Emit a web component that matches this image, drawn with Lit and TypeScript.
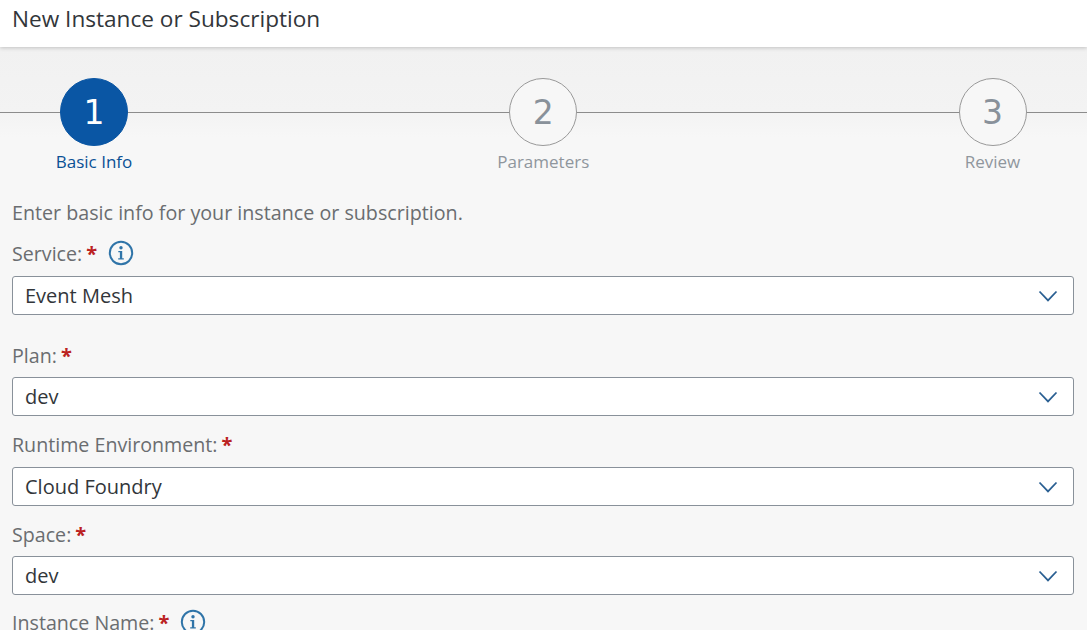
import { LitElement, html, css, nothing } from "lit";
import { customElement } from "lit/decorators.js";

const STEPS = ["Basic Info", "Parameters", "Review"];
const FIELDS = [
  { label: "Service:", value: "Event Mesh", info: true, cls: "f-service" },
  { label: "Plan:", value: "dev", info: false, cls: "f-plan" },
  { label: "Runtime Environment:", value: "Cloud Foundry", info: false, cls: "f-runtime" },
  { label: "Space:", value: "dev", info: false, cls: "f-space" },
];

@customElement("app-root")
export class AppRoot extends LitElement {
  static styles = css`
    :host {
      display: block;
      width: 1087px;
      height: 630px;
      overflow: hidden;
      background: #f7f7f7;
      font-family: "Open Sans", "Noto Sans", "Liberation Sans", sans-serif;
    }
    .header {
      position: relative;
      z-index: 1;
      height: 47px;
      box-sizing: border-box;
      padding: 4px 12px 0;
      background: #fff;
      box-shadow: 0 1px 4px rgba(0, 0, 0, 0.2);
      font-size: 22.6px;
      line-height: 30px;
      color: #32363a;
    }
    .wizard {
      position: relative;
      display: flex;
      justify-content: space-between;
      height: 129px;
      box-sizing: border-box;
      padding: 31px 44.5px 0 44px;
      background: linear-gradient(#f1f1f1 0, #f3f3f3 65px, #f7f7f7 90px);
    }
    .wizard::before {
      content: "";
      position: absolute;
      left: 0;
      right: 0;
      top: 65px;
      height: 1px;
      background: #8c8c8c;
    }
    .step {
      position: relative;
      width: 100px;
      display: flex;
      flex-direction: column;
      align-items: center;
    }
    .circle {
      width: 68px;
      height: 68px;
      box-sizing: border-box;
      border-radius: 50%;
      display: flex;
      align-items: center;
      justify-content: center;
      border: 1px solid #999;
      background: #f7f7f7;
      color: #89919a;
      font-family: "DejaVu Sans", "Open Sans", sans-serif;
      font-size: 33px;
    }
    .active .circle {
      background: #0a56a4;
      border-color: #0a56a4;
      color: #fff;
    }
    .step-label {
      margin-top: 4px;
      font-size: 17px;
      line-height: 24px;
      white-space: nowrap;
      color: #8f969d;
    }
    .active .step-label {
      color: #0a5195;
    }
    .form {
      padding: 0 13px 0 12px;
    }
    .intro {
      margin: 0;
      padding-top: 25px;
      font-size: 19.7px;
      line-height: 24px;
      color: #6a6d70;
    }
    .label-row {
      display: flex;
      align-items: center;
      height: 28px;
      font-size: 19.65px;
      color: #6a6d70;
    }
    .req {
      color: #bb2222;
      font-weight: 700;
      margin-left: 4px;
      font-size: 20px;
    }
    .info {
      width: 26px;
      height: 26px;
      margin-left: 11px;
      flex: none;
    }
    .select {
      height: 39px;
      box-sizing: border-box;
      margin-top: 8px;
      display: flex;
      align-items: center;
      justify-content: space-between;
      padding: 0 15px 0 12px;
      background: #fff;
      border: 1px solid #89919a;
      border-radius: 3px;
      font-size: 20px;
      color: #32363a;
    }
    .chev {
      width: 20px;
      height: 12px;
      flex: none;
    }
    .f-service { margin-top: 14px; }
    .f-plan { margin-top: 26px; }
    .f-runtime { margin-top: 14px; }
    .f-space { margin-top: 14px; }
    .f-name { margin-top: 13px; }
    .f-service .select,
    .f-runtime .select { margin-top: 9px; }
  `;

  private infoIcon() {
    return html`<svg class="info" viewBox="0 0 26 26" fill="none">
      <circle cx="13" cy="13" r="11.2" stroke="#2f74a8" stroke-width="2"></circle>
      <circle cx="13" cy="7.8" r="1.7" fill="#2f74a8"></circle>
      <path d="M10.3 11h3.9v7.2h1.6v1.3H10.2v-1.3h1.7v-5.9h-1.6z" fill="#2f74a8"></path>
    </svg>`;
  }

  private label(text: string, info: boolean) {
    return html`<div class="label-row">
      <span>${text}</span><span class="req">*</span>${info ? this.infoIcon() : nothing}
    </div>`;
  }

  render() {
    return html`
      <div class="header">New Instance or Subscription</div>
      <div class="wizard">
        ${STEPS.map(
          (s, i) => html`<div class="step ${i === 0 ? "active" : ""}">
            <div class="circle">${i + 1}</div>
            <div class="step-label">${s}</div>
          </div>`
        )}
      </div>
      <div class="form">
        <p class="intro">Enter basic info for your instance or subscription.</p>
        ${FIELDS.map(
          (f) => html`<div class=${f.cls}>
            ${this.label(f.label, f.info)}
            <div class="select">
              <span>${f.value}</span>
              <svg class="chev" viewBox="0 0 20 12" fill="none">
                <path d="M1.5 1.5 10 10.4 18.5 1.5" stroke="#2a5f92" stroke-width="1.8"></path>
              </svg>
            </div>
          </div>`
        )}
        <div class="f-name">${this.label("Instance Name:", true)}</div>
      </div>
    `;
  }
}
